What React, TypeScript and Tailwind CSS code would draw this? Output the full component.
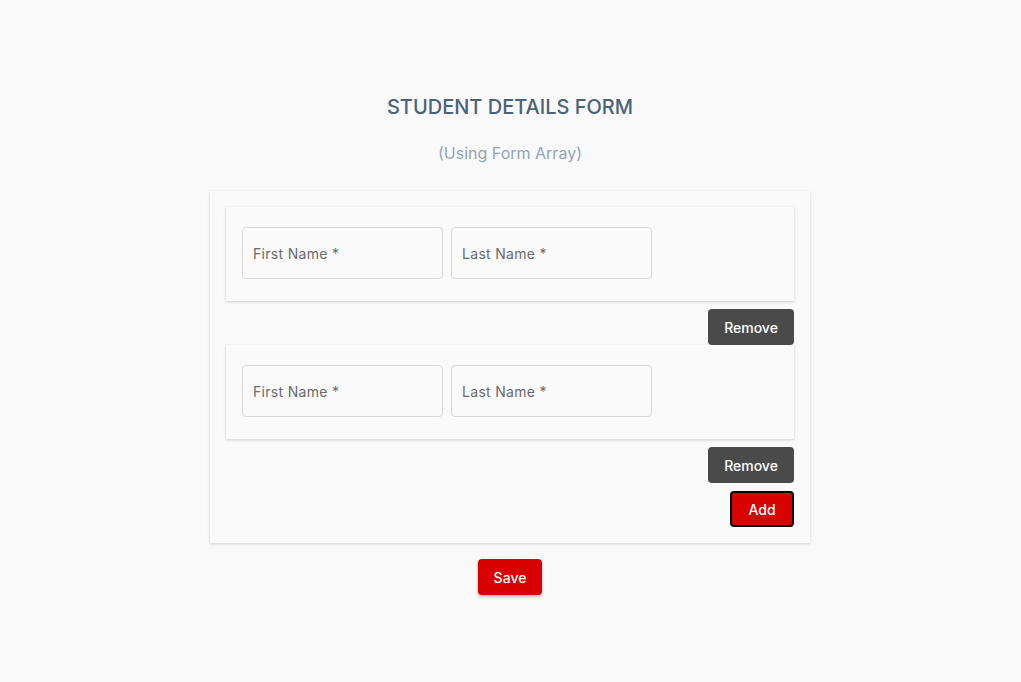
import React from "react";

function Row() {
  return (
    <div>
      <div className="bg-[#fafafa] shadow-[0_1px_3px_rgba(0,0,0,0.18)] px-4 pt-5 pb-[22px] flex gap-2">
        <input
          placeholder="First Name *"
          className="w-[201px] h-[52px] rounded border border-[#d9d9d9] bg-[#fafafa] px-[10px] text-[14px] tracking-[0.3px] text-[#374151] placeholder:text-[#6b6b6b] outline-none"
        />
        <input
          placeholder="Last Name *"
          className="w-[201px] h-[52px] rounded border border-[#d9d9d9] bg-[#fafafa] px-[10px] text-[14px] tracking-[0.3px] text-[#374151] placeholder:text-[#6b6b6b] outline-none"
        />
      </div>
      <div className="flex justify-end mt-2">
        <button className="w-[86px] h-9 rounded bg-[#4a4a4a] text-white text-[14px] font-medium">
          Remove
        </button>
      </div>
    </div>
  );
}

export default function App() {
  return (
    <div
      className="min-h-[682px] bg-[#f9f9f9] flex flex-col items-center pt-[93px] pr-px"
      style={{ fontFamily: "Inter, 'Noto Sans', sans-serif" }}
    >
      <h1 className="text-[20px] leading-7 font-medium text-[#4a6378]">
        STUDENT DETAILS FORM
      </h1>
      <p className="mt-[20px] text-[16px] leading-6 text-[#94a3b8]">(Using Form Array)</p>
      <div className="mt-[26px] w-[600px] bg-[#fafafa] shadow-[0_1px_3px_rgba(0,0,0,0.16)] p-4">
        <Row />
        <Row />
        <div className="flex justify-end mt-2">
          <button className="w-16 h-9 rounded bg-[#d90000] border-2 border-black text-white text-[14px] font-medium">
            Add
          </button>
        </div>
      </div>
      <button className="mt-4 w-16 h-9 rounded bg-[#d90000] text-white text-[14px] font-medium shadow-[0_2px_3px_rgba(0,0,0,0.25)]">
        Save
      </button>
    </div>
  );
}
